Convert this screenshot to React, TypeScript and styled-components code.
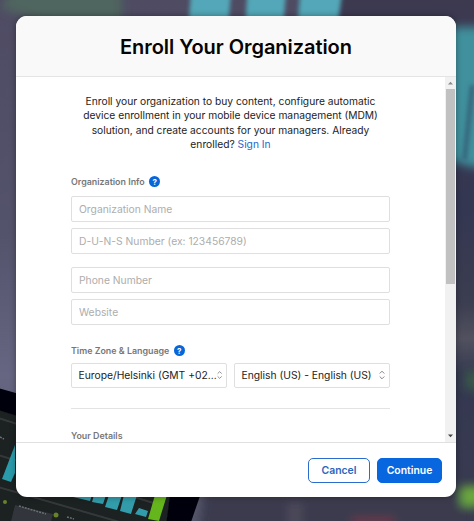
import { ReactNode } from 'react';
import styled, { createGlobalStyle, css } from 'styled-components';

const GlobalStyle = createGlobalStyle`
  * {
    box-sizing: border-box;
  }
  body {
    margin: 0;
    overflow: hidden;
    font-family: Inter, 'Liberation Sans', sans-serif;
  }
  button,
  input {
    font-family: inherit;
  }
`;

const Page = styled.div`
  position: relative;
  width: 474px;
  height: 521px;
  padding: 16px 18px 24px 16px;
  overflow: hidden;
`;

const Backdrop = styled.svg`
  position: absolute;
  inset: 0;
`;

const Dialog = styled.div`
  position: relative;
  display: flex;
  flex-direction: column;
  width: 440px;
  height: 481px;
  background: #fff;
  border-radius: 11px;
  overflow: hidden;
  box-shadow: 0 0 6px rgba(0, 0, 0, 0.35);
`;

const Header = styled.header`
  flex: none;
  height: 61px;
  padding-top: 19px;
  background: #f9f9f9;
  border-bottom: 1px solid #e4e4e4;
`;

const Title = styled.h1`
  margin: 0;
  font-size: 20px;
  line-height: 24px;
  font-weight: 600;
  letter-spacing: -0.05px;
  text-align: center;
  color: #050505;
`;

const Body = styled.div`
  flex: 1;
  display: flex;
  min-height: 0;
`;

const Content = styled.div`
  flex: 1;
  padding: 17px 55px 0;
  overflow: hidden;
`;

const Intro = styled.p`
  margin: 0 0 22px;
  font-size: 10.25px;
  line-height: 14.4px;
  text-align: center;
  white-space: nowrap;
  color: #1c1c1c;
`;

const Link = styled.a`
  color: #1f66c7;
`;

const Label = styled.div`
  display: flex;
  align-items: center;
  gap: 4.5px;
  height: 15px;
  font-size: 8.9px;
  font-weight: 600;
  color: #777;
`;

const Help = styled.span`
  display: inline-flex;
  align-items: center;
  justify-content: center;
  width: 11px;
  height: 11px;
  margin-top: 1px;
  border-radius: 50%;
  background: #0866d8;
  color: #fff;
  font-size: 8px;
  font-weight: 700;
`;

const FieldGroup = styled.div`
  display: flex;
  flex-direction: column;
  gap: 6px;
  margin: 7px 0 13px;

  & + & {
    margin-bottom: 18px;
  }
`;

const fieldBox = css`
  border: 1px solid #dfdfdf;
  border-radius: 2px;
  background: #fff;
  font-size: 10.3px;
`;

const Input = styled.input`
  ${fieldBox}
  width: 319px;
  height: 26px;
  padding: 0 7px;
  outline: none;

  &::placeholder {
    color: #adadad;
    opacity: 1;
  }
`;

const SelectRow = styled.div`
  display: flex;
  gap: 7px;
  margin: 5px 0 19px;
  padding-bottom: 20px;
  border-bottom: 1px solid #e3e3e3;
`;

const SelectBox = styled.div`
  ${fieldBox}
  display: flex;
  align-items: center;
  justify-content: space-between;
  width: 156px;
  height: 25px;
  padding: 0 4px 0 6.5px;
  white-space: nowrap;
  color: #222;
`;

const Scrollbar = styled.div`
  display: flex;
  flex-direction: column;
  align-items: center;
  justify-content: space-between;
  flex: none;
  width: 11px;
  background: #f1f1f1;
`;

const Thumb = styled.div`
  width: 9px;
  height: 195px;
  margin-bottom: auto;
  background: #c1c1c1;
`;

const ScrollArrow = styled.svg`
  flex: none;
  width: 11px;
  height: 12px;
`;

const Footer = styled.footer`
  flex: none;
  display: flex;
  justify-content: flex-end;
  gap: 7px;
  height: 55px;
  padding: 15px 14px 0 0;
  border-top: 1px solid #e0e0e0;
`;

const Button = styled.button<{ $primary?: boolean }>`
  width: ${({ $primary }) => ($primary ? '65px' : '62px')};
  height: 25px;
  padding: 0;
  border: 1px solid ${({ $primary }) => ($primary ? '#0866df' : '#2b6dcc')};
  border-radius: 5px;
  background: ${({ $primary }) => ($primary ? '#0866df' : '#fff')};
  color: ${({ $primary }) => ($primary ? '#fff' : '#2b66bd')};
  font-size: 10.4px;
  font-weight: 600;
`;

const Select = ({ children }: { children: ReactNode }) => (
  <SelectBox>
    {children}
    <svg width="6" height="10" viewBox="0 0 6 10" fill="none" stroke="#777" strokeWidth="0.9">
      <path d="M0.7 3.5 3 1.2l2.3 2.3M0.7 6.5 3 8.8l2.3-2.3" />
    </svg>
  </SelectBox>
);

// blurred photo of a monitor and a mixing console behind the dialog
const Scene = () => (
  <Backdrop width="474" height="521" viewBox="0 0 474 521">
    <defs>
      <linearGradient id="wall" x1="0" y1="0" x2="0" y2="1">
        <stop offset="0" stopColor="#4e4b63" />
        <stop offset="0.45" stopColor="#54536c" />
        <stop offset="0.72" stopColor="#666682" />
        <stop offset="1" stopColor="#55556a" />
      </linearGradient>
      <linearGradient id="right" x1="0" y1="0" x2="0" y2="1">
        <stop offset="0" stopColor="#3d3a50" />
        <stop offset="0.4" stopColor="#343752" />
        <stop offset="0.58" stopColor="#3b3d50" />
        <stop offset="0.65" stopColor="#51515f" />
        <stop offset="0.72" stopColor="#343850" />
        <stop offset="1" stopColor="#393b50" />
      </linearGradient>
      <filter id="soft" filterUnits="userSpaceOnUse" x="-40" y="-40" width="554" height="601">
        <feGaussianBlur stdDeviation="2.2" />
      </filter>
      <filter id="softer" filterUnits="userSpaceOnUse" x="-40" y="-40" width="554" height="601">
        <feGaussianBlur stdDeviation="5" />
      </filter>
      <filter id="slight">
        <feGaussianBlur stdDeviation="0.6" />
      </filter>
    </defs>
    <rect width="474" height="521" fill="url(#wall)" />
    <rect x="300" width="174" height="521" fill="url(#right)" />
    <g filter="url(#softer)">
      <path d="M15-15h107v40H50L0 8z" fill="#50655f" />
      <path d="M445 27h50v142l-22-2-28-8z" fill="#3f909d" />
      <rect x="465" y="370" width="20" height="20" fill="#39564a" />
      <path d="M204 490h270v50H198z" fill="#3a3b4d" />
      <rect x="461" y="486" width="30" height="20" fill="#6aa83c" />
      <rect x="352" y="518" width="42" height="16" fill="#6b3848" />
      <rect x="288" y="503" width="14" height="30" fill="#4b4a5a" />
    </g>
    <g filter="url(#soft)">
      <path d="M192-20h40l-4 50h-40zM248-20h39l-4 50h-38zM301-20h43l-7 50h-40z" fill="#52a7b8" />
      <path d="M470 85h5l-8 75h-5z" fill="#35657b" />
    </g>
    <g filter="url(#slight)">
      <path d="M-2 388 190 442 202 490 190 525H-2z" fill="#05060d" />
      <path d="M-2 410 174 465 166 525H-2z" fill="#1d2021" />
      <path d="M-2 418 30 428M-2 455 160 505M-2 487 130 525" stroke="#343939" strokeWidth="2" />
      <path d="M15 445v28l-4 9-9-3z" fill="#299baa" />
      <path d="M75 492 92 495 90 501 73 497zM94 495h12l-3 9-11-2zM109 495h13l-5 15-12-3zM124 495h13l-6 19-11-3zM139 508l9 3-2 6-11-3z" fill="#319caa" />
      <path d="M155 495h12l-8 26-11-2z" fill="#65b51b" />
      <path d="M15 505 53 514 50 525H10z" fill="#30363a" />
      <circle cx="5" cy="502" r="2" fill="#658329" />
      <circle cx="56" cy="515" r="2.5" fill="#658329" />
      <path d="M19 506l27 8M0 437l4 2M67 517l7 2" stroke="#697173" strokeWidth="1.5" strokeDasharray="2 1" />
    </g>
  </Backdrop>
);

export default function App() {
  return (
    <>
      <GlobalStyle />
      <Page>
        <Scene />
        <Dialog>
          <Header>
            <Title>Enroll Your Organization</Title>
          </Header>
          <Body>
            <Content>
              <Intro>
                Enroll your organization to buy content, configure automatic
                <br />
                device enrollment in your mobile device management (MDM)
                <br />
                solution, and create accounts for your managers. Already
                <br />
                enrolled? <Link>Sign In</Link>
              </Intro>
              <Label>
                Organization Info <Help>?</Help>
              </Label>
              <FieldGroup>
                <Input placeholder="Organization Name" />
                <Input placeholder="D-U-N-S Number (ex: 123456789)" />
              </FieldGroup>
              <FieldGroup>
                <Input placeholder="Phone Number" />
                <Input placeholder="Website" />
              </FieldGroup>
              <Label>
                Time Zone &amp; Language <Help>?</Help>
              </Label>
              <SelectRow>
                <Select>Europe/Helsinki (GMT +02...</Select>
                <Select>English (US) - English (US)</Select>
              </SelectRow>
              <Label>Your Details</Label>
            </Content>
            <Scrollbar>
              <ScrollArrow viewBox="0 0 11 12">
                <path d="M3 7.5h5L5.5 4.8z" fill="#8b8b8b" />
              </ScrollArrow>
              <Thumb />
              <ScrollArrow viewBox="0 0 11 12">
                <path d="M3 4.5h5L5.5 7.2z" fill="#444" />
              </ScrollArrow>
            </Scrollbar>
          </Body>
          <Footer>
            <Button>Cancel</Button>
            <Button $primary>Continue</Button>
          </Footer>
        </Dialog>
      </Page>
    </>
  );
}
